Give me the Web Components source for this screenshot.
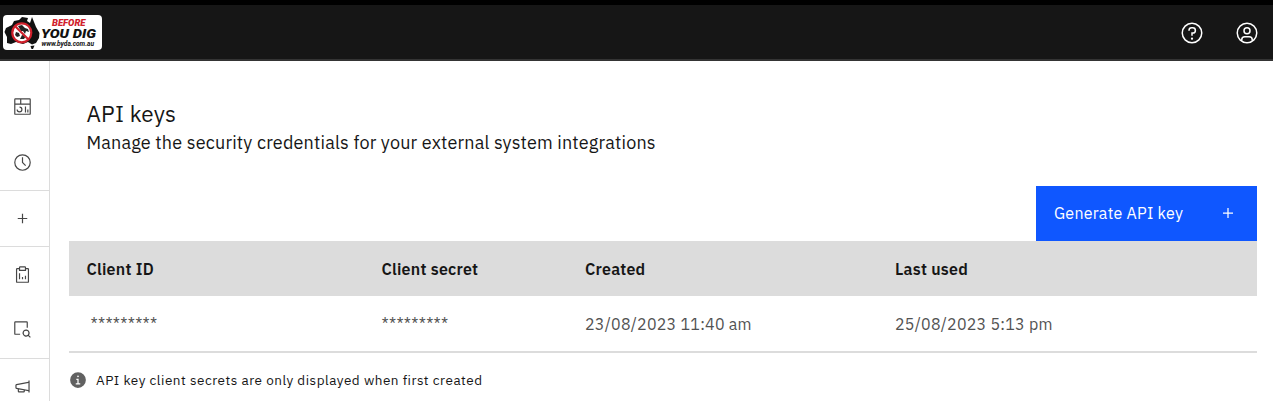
<!DOCTYPE html>
<html lang="en">
<head>
<meta charset="utf-8">
<title>API keys</title>
<style>
    body {
        margin: 0;
        height: 401px;
        overflow: hidden;
        background: #fff;
        color: #161616;
        font-family: "IBM Plex Sans", Roboto, sans-serif;
    }
</style>
</head>
<body>
<app-shell>
    <app-header slot="header">
        <byda-logo></byda-logo>
        <ui-icon slot="actions" name="help" size="24"></ui-icon>
        <ui-icon slot="actions" name="user" size="24"></ui-icon>
    </app-header>
    <side-nav slot="nav">
        <nav-group>
            <ui-icon name="dashboard"></ui-icon>
            <ui-icon name="time"></ui-icon>
        </nav-group>
        <nav-group>
            <ui-icon name="add"></ui-icon>
        </nav-group>
        <nav-group>
            <ui-icon name="report"></ui-icon>
            <ui-icon name="area-search"></ui-icon>
        </nav-group>
        <nav-group>
            <ui-icon name="bullhorn"></ui-icon>
        </nav-group>
    </side-nav>
    <page-heading>
        API keys
        <span slot="description">Manage the security credentials for your external system integrations</span>
    </page-heading>
    <primary-button icon="add">Generate API key</primary-button>
    <key-table></key-table>
    <info-note>API key client secrets are only displayed when first created</info-note>
</app-shell>

<script>
const icons = {
    help: `<path d="M16 2a14 14 0 1 0 14 14A14 14 0 0 0 16 2Zm0 26a12 12 0 1 1 12-12 12 12 0 0 1-12 12Z"/>
        <circle cx="16" cy="23.5" r="1.5"/>
        <path d="M17 8h-1.5A4.49 4.49 0 0 0 11 12.5v.5h2v-.5a2.5 2.5 0 0 1 2.5-2.5H17a2.5 2.5 0 0 1 0 5h-2v4.5h2V17a4.5 4.5 0 0 0 0-9Z"/>`,
    user: `<path d="M16 8a5 5 0 1 0 5 5 5 5 0 0 0-5-5Zm0 8a3 3 0 1 1 3-3 3 3 0 0 1-3 3Z"/>
        <path d="M16 2a14 14 0 1 0 14 14A14 14 0 0 0 16 2ZM10 26.38V25a3 3 0 0 1 3-3h6a3 3 0 0 1 3 3v1.38a11.9 11.9 0 0 1-12 0Zm13.99-1.45A5 5 0 0 0 19 20h-6a5 5 0 0 0-4.99 4.93 12 12 0 1 1 15.98 0Z"/>`,
    dashboard: `<path d="M24 21h2v5h-2zM20 16h2v10h-2zM11 26a5 5 0 0 1-5-5h2a3 3 0 1 0 3-3v-2a5 5 0 0 1 0 10Z"/>
        <path d="M28 2H4a2 2 0 0 0-2 2v24a2 2 0 0 0 2 2h24a2 2 0 0 0 2-2V4a2 2 0 0 0-2-2Zm0 9H14V4h14ZM12 4v7H4V4ZM4 28V13h24v15Z"/>`,
    time: `<path d="M16 30a14 14 0 1 1 14-14 14 14 0 0 1-14 14Zm0-26a12 12 0 1 0 12 12A12 12 0 0 0 16 4Z"/>
        <path d="M20.59 22 15 16.41V7h2v8.58l5 5.01L20.59 22z"/>`,
    add: `<path d="M17 15V8h-2v7H8v2h7v7h2v-7h7v-2h-7z"/>`,
    report: `<path d="M15 20h2v4h-2zM20 18h2v6h-2zM10 14h2v10h-2z"/>
        <path d="M25 5h-3V4a2 2 0 0 0-2-2h-8a2 2 0 0 0-2 2v1H7a2 2 0 0 0-2 2v21a2 2 0 0 0 2 2h18a2 2 0 0 0 2-2V7a2 2 0 0 0-2-2ZM12 4h8v4h-8Zm13 24H7V7h3v3h12V7h3Z"/>`,
    'area-search': `<path d="M12 25H4a2 2 0 0 1-2-2V4a2 2 0 0 1 2-2h19a2 2 0 0 1 2 2v9h-2V4H4v19h8z"/>
        <path d="m30 28.6-3.1-3.1a6 6 0 1 0-1.4 1.4l3.1 3.1ZM22 26a4 4 0 1 1 4-4 4 4 0 0 1-4 4Z"/>`,
    bullhorn: `<path d="M26 6v2.17L5.64 11.87A2 2 0 0 0 4 13.84v4.32a2 2 0 0 0 1.64 2L8 20.56V24a2 2 0 0 0 2 2h8a2 2 0 0 0 2-2v-1.26l6 1.09V26h2V6Zm-8 18h-8v-3.07l8 1.45ZM6 18.17v-4.34l20-3.63v11.6Z"/>`,
    info: `<path d="M16 2a14 14 0 1 0 14 14A14 14 0 0 0 16 2Zm0 6a1.5 1.5 0 1 1-1.5 1.5A1.5 1.5 0 0 1 16 8Zm4 16.13h-8v-2.25h2.88v-5.75H13v-2.25h4.13v8H20Z"/>`
};

class UiIcon extends HTMLElement {
    connectedCallback() {
        const size = this.getAttribute('size') || 19;
        this.attachShadow({mode: 'open'}).innerHTML = `
            <style>
                :host { display: block; width: ${size}px; height: ${size}px; }
                svg { display: block; fill: currentColor; }
            </style>
            <svg viewBox="0 0 32 32" width="${size}" height="${size}">${icons[this.getAttribute('name')]}</svg>
        `;
    }
}

class BydaLogo extends HTMLElement {
    connectedCallback() {
        this.attachShadow({mode: 'open'}).innerHTML = `
            <style>
                :host { display: block; }
                svg { display: block; overflow: visible; }
                text { font-family: Roboto, sans-serif; font-weight: 900; font-style: italic; }
            </style>
            <svg width="99" height="35" viewBox="0 0 99 35">
                <rect width="99" height="35" rx="4" fill="#fff"/>
                <path fill="#111" d="M1.500 17 3 13 9 10 11 6 16 5 19 2 25 3 24 6 27 8 29 2 31 7 33 12 36.500 18 36 23 33 28 29 29.500 25 27 20 29 13 27 8 29 4 28 4 22Z"/>
                <path fill="#111" d="m27.500 31 4-.5-1.500 3.500-1.500 0z"/>
                <circle cx="18.800" cy="17.800" r="9.500" fill="#fff" stroke="#d0202b" stroke-width="2.200"/>
                <path fill="#222" d="m15 11 4-1 3 3 3 1 1 3-3-1-1 3-2-3-2 0zM13 17l3 1 1 3-3 1-2-2zM19 20l4 1-2 3-4 0z"/>
                <path stroke="#d0202b" stroke-width="2.200" d="m12 11 13.500 13.500"/>
                <text x="49" y="10.500" font-size="8.500" fill="#d0202b" textLength="33.500" lengthAdjust="spacingAndGlyphs">BEFORE</text>
                <text x="38" y="23.300" font-size="13.500" fill="#111" textLength="55" lengthAdjust="spacingAndGlyphs">YOU DIG</text>
                <text x="38.500" y="30.700" font-size="6.500" fill="#111" style="font-weight: 700" textLength="52.500" lengthAdjust="spacingAndGlyphs">www.byda.com.au</text>
            </svg>
        `;
    }
}

class AppHeader extends HTMLElement {
    connectedCallback() {
        this.attachShadow({mode: 'open'}).innerHTML = `
            <style>
                :host {
                    display: flex;
                    align-items: center;
                    box-sizing: border-box;
                    height: 61px;
                    padding: 0 14px 0 2.500px;
                    border-top: 5px solid #000;
                    border-bottom: 2px solid #343434;
                    background: #161616;
                    color: #fff;
                }
                .actions { display: flex; gap: 31px; margin-left: auto; padding-top: 1px; }
            </style>
            <slot></slot>
            <div class="actions"><slot name="actions"></slot></div>
        `;
    }
}

class SideNav extends HTMLElement {
    connectedCallback() {
        this.attachShadow({mode: 'open'}).innerHTML = `
            <style>
                :host {
                    display: block;
                    box-sizing: border-box;
                    width: 50px;
                    height: 100%;
                    padding-top: 18.600px;
                    border-right: 1px solid #dcdcdc;
                    color: #464646;
                }
            </style>
            <slot></slot>
        `;
    }
}

class NavGroup extends HTMLElement {
    connectedCallback() {
        this.attachShadow({mode: 'open'}).innerHTML = `
            <style>
                :host { display: block; border-bottom: 1px solid #dcdcdc; }
                ::slotted(ui-icon) { padding: 17.875px 12.750px 18.375px; }
            </style>
            <slot></slot>
        `;
    }
}

class AppShell extends HTMLElement {
    connectedCallback() {
        this.attachShadow({mode: 'open'}).innerHTML = `
            <style>
                :host { display: block; }
                .body { display: grid; grid-template-columns: 50px 1fr; height: 340px; }
                nav { overflow: hidden; }
                main { display: flex; flex-direction: column; padding: 36px 16px 0 19px; }
            </style>
            <slot name="header"></slot>
            <div class="body">
                <nav><slot name="nav"></slot></nav>
                <main><slot></slot></main>
            </div>
        `;
    }
}

class PageHeading extends HTMLElement {
    connectedCallback() {
        this.attachShadow({mode: 'open'}).innerHTML = `
            <style>
                :host { display: block; height: 89px; padding-left: 17.500px; }
                h1 { margin: 0; font-size: 22.500px; font-weight: 400; line-height: 33px; letter-spacing: .2px; }
                p { margin: 0; font-size: 18px; line-height: 25px; letter-spacing: .18px; }
            </style>
            <h1><slot></slot></h1>
            <p><slot name="description"></slot></p>
        `;
    }
}

class PrimaryButton extends HTMLElement {
    connectedCallback() {
        this.attachShadow({mode: 'open'}).innerHTML = `
            <style>
                :host { display: block; align-self: flex-end; }
                button {
                    display: flex;
                    align-items: center;
                    justify-content: space-between;
                    box-sizing: border-box;
                    width: 221px;
                    height: 55px;
                    padding: 0 19px 1px 18px;
                    border: 0;
                    background: #0f57ff;
                    color: #fff;
                    font: 400 16px "IBM Plex Sans", Roboto, sans-serif;
                    letter-spacing: .25px;
                }
            </style>
            <button><span><slot></slot></span><ui-icon name="${this.getAttribute('icon')}" size="20"></ui-icon></button>
        `;
    }
}

const keys = [
    {id: '*********', secret: '*********', created: '23/08/2023 11:40 am', used: '25/08/2023 5:13 pm'}
];

class KeyTable extends HTMLElement {
    connectedCallback() {
        this.attachShadow({mode: 'open'}).innerHTML = `
            <style>
                :host { display: block; font-size: 16px; letter-spacing: .24px; }
                .row {
                    display: grid;
                    grid-template-columns: 295px 203.500px 310px 1fr;
                    align-items: center;
                    height: 55px;
                    padding-left: 17.500px;
                    border-bottom: 2px solid #dcdcdc;
                    color: #525252;
                }
                .row span:first-child { padding-left: 4px; }
                .head { background: #dcdcdc; border: 0; color: #161616; font-weight: 600; }
                .head span:first-child { padding-left: 0; }
            </style>
            <div class="row head">
                <span>Client ID</span><span>Client secret</span><span>Created</span><span>Last used</span>
            </div>
            ${keys.map(k => `<div class="row">
                <span>${k.id}</span><span>${k.secret}</span><span>${k.created}</span><span>${k.used}</span>
            </div>`).join('')}
        `;
    }
}

class InfoNote extends HTMLElement {
    connectedCallback() {
        this.attachShadow({mode: 'open'}).innerHTML = `
            <style>
                :host {
                    display: flex;
                    align-items: center;
                    gap: 9px;
                    margin-top: 18px;
                    font-size: 13.500px;
                    line-height: 18px;
                    letter-spacing: .5px;
                }
                ui-icon { color: #616161; }
            </style>
            <ui-icon name="info" size="18"></ui-icon>
            <span><slot></slot></span>
        `;
    }
}

customElements.define('ui-icon', UiIcon);
customElements.define('byda-logo', BydaLogo);
customElements.define('app-header', AppHeader);
customElements.define('side-nav', SideNav);
customElements.define('nav-group', NavGroup);
customElements.define('app-shell', AppShell);
customElements.define('page-heading', PageHeading);
customElements.define('primary-button', PrimaryButton);
customElements.define('key-table', KeyTable);
customElements.define('info-note', InfoNote);
</script>
</body>
</html>
